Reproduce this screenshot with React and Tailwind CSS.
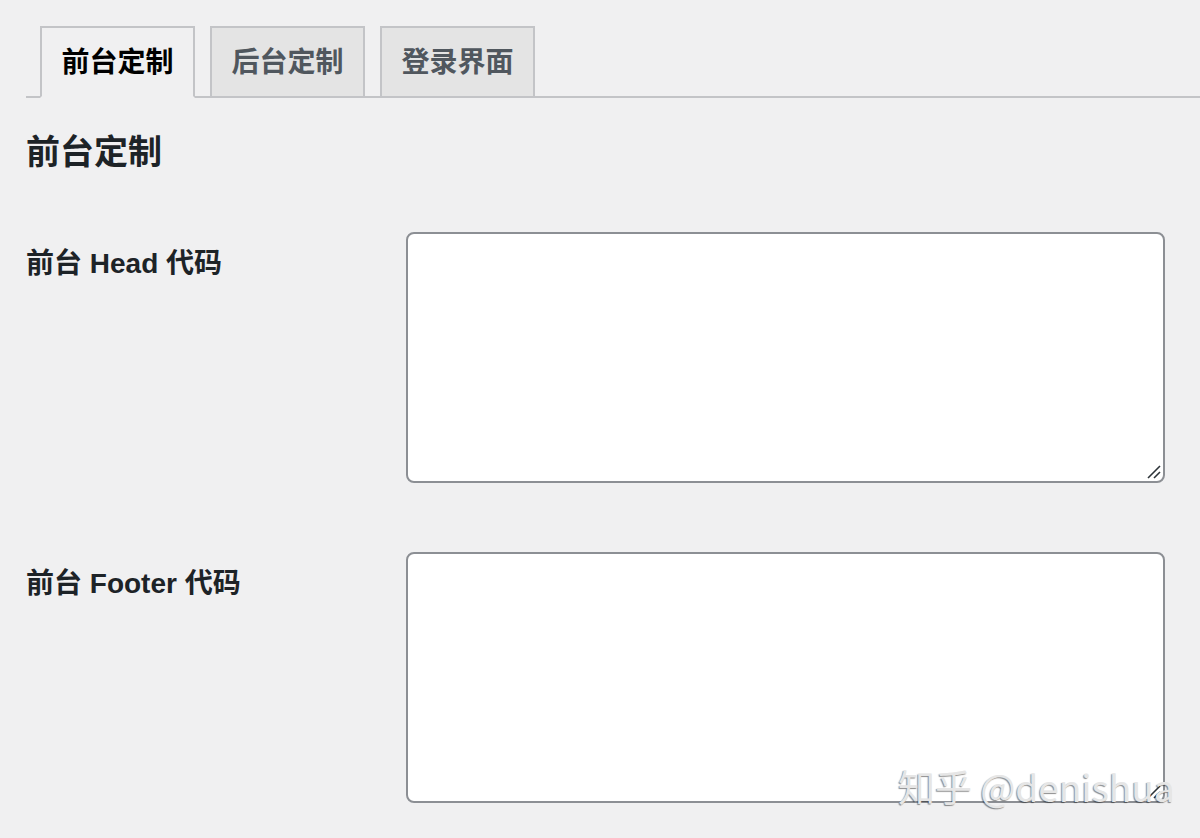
import React from "react";

const font = { fontFamily: '"Liberation Sans", "Noto Sans CJK SC", sans-serif' };

function Tab({ label, active }) {
  return (
    <div
      className={
        "h-[72px] w-[155px] border-2 border-[#c3c4c7] flex items-center justify-center pt-[2px] text-[28px] font-bold leading-none -mb-[2px] " +
        (active
          ? "bg-[#f0f0f1] text-black border-b-[#f0f0f1]"
          : "bg-[#e4e4e4] text-[#50575e]")
      }
    >
      {label}
    </div>
  );
}

function ResizeHandle() {
  return (
    <svg
      className="absolute right-[3px] bottom-[3px] pointer-events-none"
      width="16"
      height="16"
      viewBox="0 0 16 16"
    >
      <line x1="2" y1="14" x2="14" y2="2" stroke="#2c3338" strokeWidth="1.6" />
      <line x1="8" y1="14" x2="14" y2="8" stroke="#2c3338" strokeWidth="1.6" />
    </svg>
  );
}

function Row({ label, top }) {
  return (
    <div className={"flex " + top}>
      <div className="w-[380px] shrink-0 pt-[14px] text-[28px] leading-[36px] font-bold text-[#1d2327]">
        {label}
      </div>
      <div className="relative">
        <textarea className="block w-[759px] h-[251px] border-2 border-[#8c8f94] rounded-[8px] bg-white outline-none resize-none" />
        <ResizeHandle />
      </div>
    </div>
  );
}

export default function App() {
  return (
    <div
      className="relative w-[1200px] h-[838px] overflow-hidden bg-[#f0f0f1] pl-[26px] pt-[26px]"
      style={font}
    >
      <div className="flex gap-[15px] pl-[14px] border-b-2 border-[#c3c4c7]">
        <Tab label="前台定制" active />
        <Tab label="后台定制" />
        <Tab label="登录界面" />
      </div>
      <h2 className="mt-[32px] text-[34px] leading-[44px] font-bold text-[#1d2327]">前台定制</h2>
      <Row label="前台 Head 代码" top="mt-[58px]" />
      <Row label="前台 Footer 代码" top="mt-[69px]" />
      <div
        className="absolute left-[898px] top-[764px] text-[37px] leading-[44px] text-[#e6e6e6] whitespace-nowrap"
        style={{
          fontFamily: '"Noto Sans CJK SC", sans-serif',
          textShadow: "-1px 1px 1px rgba(0,0,0,0.45)",
        }}
      >
        知乎 @denishua
      </div>
    </div>
  );
}
